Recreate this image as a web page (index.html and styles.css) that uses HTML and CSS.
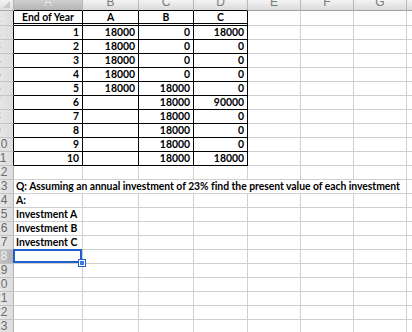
FILE: index.html
```html
<!DOCTYPE html>
<html>
<head>
<meta charset="utf-8">
<link rel="stylesheet" href="styles.css">
</head>
<body>
<div class="sheet">
  <div class="corner"><svg width="9" height="8" viewBox="0 0 9 8"><path d="M8 0 L8 7 L1 7 Z" fill="#c9c9c9"/></svg></div>
  <div class="ch sel tb">A</div><div class="ch tb">B</div><div class="ch tb">C</div><div class="ch tb">D</div><div class="ch">E</div><div class="ch">F</div><div class="ch">G</div><div class="ch">H</div>

  <div class="rh tb"><span>1</span></div>
  <div class="c t hd">End of Year</div><div class="c t hd">A</div><div class="c t hd">B</div><div class="c t hd">C</div><div class="c"></div><div class="c"></div><div class="c"></div><div class="c"></div>

  <div class="rh tb"><span>2</span></div>
  <div class="c t n">1</div><div class="c t n">18000</div><div class="c t n">0</div><div class="c t n">18000</div><div class="c"></div><div class="c"></div><div class="c"></div><div class="c"></div>

  <div class="rh tb"><span>3</span></div>
  <div class="c t n">2</div><div class="c t n">18000</div><div class="c t n">0</div><div class="c t n">0</div><div class="c"></div><div class="c"></div><div class="c"></div><div class="c"></div>

  <div class="rh tb"><span>4</span></div>
  <div class="c t n">3</div><div class="c t n">18000</div><div class="c t n">0</div><div class="c t n">0</div><div class="c"></div><div class="c"></div><div class="c"></div><div class="c"></div>

  <div class="rh tb"><span>5</span></div>
  <div class="c t n">4</div><div class="c t n">18000</div><div class="c t n">0</div><div class="c t n">0</div><div class="c"></div><div class="c"></div><div class="c"></div><div class="c"></div>

  <div class="rh tb"><span>6</span></div>
  <div class="c t n">5</div><div class="c t n">18000</div><div class="c t n">18000</div><div class="c t n">0</div><div class="c"></div><div class="c"></div><div class="c"></div><div class="c"></div>

  <div class="rh tb"><span>7</span></div>
  <div class="c t n">6</div><div class="c t n"></div><div class="c t n">18000</div><div class="c t n">90000</div><div class="c"></div><div class="c"></div><div class="c"></div><div class="c"></div>

  <div class="rh tb"><span>8</span></div>
  <div class="c t n">7</div><div class="c t n"></div><div class="c t n">18000</div><div class="c t n">0</div><div class="c"></div><div class="c"></div><div class="c"></div><div class="c"></div>

  <div class="rh tb"><span>9</span></div>
  <div class="c t n">8</div><div class="c t n"></div><div class="c t n">18000</div><div class="c t n">0</div><div class="c"></div><div class="c"></div><div class="c"></div><div class="c"></div>

  <div class="rh tb"><span>10</span></div>
  <div class="c t n">9</div><div class="c t n"></div><div class="c t n">18000</div><div class="c t n">0</div><div class="c"></div><div class="c"></div><div class="c"></div><div class="c"></div>

  <div class="rh tb"><span>11</span></div>
  <div class="c t n">10</div><div class="c t n"></div><div class="c t n">18000</div><div class="c t n">18000</div><div class="c"></div><div class="c"></div><div class="c"></div><div class="c"></div>

  <div class="rh"><span>12</span></div>
  <div class="c"></div><div class="c"></div><div class="c"></div><div class="c"></div><div class="c"></div><div class="c"></div><div class="c"></div><div class="c"></div>

  <div class="rh"><span>13</span></div>
  <div class="c lbl span7">Q: Assuming an annual investment of 23% find the present value of each investment</div><div class="c"></div>

  <div class="rh"><span>14</span></div>
  <div class="c lbl">A:</div><div class="c"></div><div class="c"></div><div class="c"></div><div class="c"></div><div class="c"></div><div class="c"></div><div class="c"></div>

  <div class="rh"><span>15</span></div>
  <div class="c lbl">Investment A</div><div class="c"></div><div class="c"></div><div class="c"></div><div class="c"></div><div class="c"></div><div class="c"></div><div class="c"></div>

  <div class="rh"><span>16</span></div>
  <div class="c lbl">Investment B</div><div class="c"></div><div class="c"></div><div class="c"></div><div class="c"></div><div class="c"></div><div class="c"></div><div class="c"></div>

  <div class="rh"><span>17</span></div>
  <div class="c lbl">Investment C</div><div class="c"></div><div class="c"></div><div class="c"></div><div class="c"></div><div class="c"></div><div class="c"></div><div class="c"></div>

  <div class="rh sel"><span>18</span></div>
  <div class="c active"><i class="handle"></i></div><div class="c"></div><div class="c"></div><div class="c"></div><div class="c"></div><div class="c"></div><div class="c"></div><div class="c"></div>

  <div class="rh"><span>19</span></div>
  <div class="c"></div><div class="c"></div><div class="c"></div><div class="c"></div><div class="c"></div><div class="c"></div><div class="c"></div><div class="c"></div>

  <div class="rh"><span>20</span></div>
  <div class="c"></div><div class="c"></div><div class="c"></div><div class="c"></div><div class="c"></div><div class="c"></div><div class="c"></div><div class="c"></div>

  <div class="rh"><span>21</span></div>
  <div class="c"></div><div class="c"></div><div class="c"></div><div class="c"></div><div class="c"></div><div class="c"></div><div class="c"></div><div class="c"></div>

  <div class="rh"><span>22</span></div>
  <div class="c"></div><div class="c"></div><div class="c"></div><div class="c"></div><div class="c"></div><div class="c"></div><div class="c"></div><div class="c"></div>

  <div class="rh"><span>23</span></div>
  <div class="c"></div><div class="c"></div><div class="c"></div><div class="c"></div><div class="c"></div><div class="c"></div><div class="c"></div><div class="c"></div>
</div>
</body>
</html>
```

FILE: styles.css
```css
html, body {
  margin: 0;
  padding: 0;
}
body {
  width: 412px;
  height: 332px;
  overflow: hidden;
  background: #fff;
  font-family: Lato, "Liberation Sans", sans-serif;
  font-size: 10.4px;
  color: #000;
}
.sheet {
  display: grid;
  grid-template-columns: 14px 69px 56px 55px 54px 53px 53px 53px 40px;
  grid-template-rows: 11px 15px repeat(22, 14px);
}
.sheet > div {
  box-sizing: border-box;
  overflow: hidden;
  white-space: nowrap;
  display: flex;
  align-items: flex-end;
}
.corner {
  background: linear-gradient(#f2f2f2, #dedede);
  border-right: 1px solid #b4b4b4;
  border-bottom: 1px solid #a8a8a8;
  justify-content: flex-end;
  align-items: flex-start !important;
}
.corner svg { display: block; margin: 1px 2px 0 0; }
.ch {
  background: linear-gradient(#f4f4f4, #dadada);
  border-right: 1px solid #b8b8b8;
  border-bottom: 1px solid #a0a0a0;
  justify-content: center;
  font-family: "Liberation Sans", sans-serif;
  font-size: 12px;
  line-height: 12px;
  color: #7a7a7a;
  padding-bottom: 2px;
}
.ch.sel {
  background: linear-gradient(#cfcfcf, #b4b4b4);
  color: #f4f4f4;
  text-shadow: 0 0 1px #8a8a8a;
}
.ch.tb { border-bottom-color: #000; }
.rh {
  background: linear-gradient(90deg, #e6e6e6, #dcdcdc);
  border-right: 1px solid #b4b4b4;
  border-bottom: 1px solid #c4c4c4;
  justify-content: flex-end;
  font-family: "Liberation Sans", sans-serif;
  font-size: 12px;
  line-height: 13px;
  color: #6a6a6a;
}
.rh span {
  flex: none;
  width: 19px;
  text-align: left;
}
.rh.tb { border-right-color: #000; }
.rh.sel {
  background: linear-gradient(90deg, #c2c2c2, #b2b2b2);
  color: #f2f2f2;
}
.c {
  border-right: 1px solid #d0d0d0;
  border-bottom: 1px solid #d0d0d0;
  padding: 0 2px 0 2px;
  line-height: 13px;
}
.c.t {
  border-right-color: #000;
  border-bottom-color: #000;
  font-weight: 700;
}
.c.n {
  justify-content: flex-end;
  padding-right: 3px;
}
.c.hd {
  justify-content: center;
  border-bottom: 3px double #000;
  line-height: 11px;
}
.c.lbl {
  font-weight: 700;
}
.span7 {
  grid-column: span 7;
  overflow: visible !important;
  letter-spacing: -0.04px;
}
.c.active {
  position: relative;
  overflow: visible !important;
}
.c.active::before {
  content: "";
  position: absolute;
  left: -1px;
  top: -1px;
  right: 0;
  bottom: 0;
  border: 2px solid #1d5fcc;
}
.handle {
  position: absolute;
  right: -3px;
  bottom: -3px;
  width: 4px;
  height: 4px;
  background: #3f7ee0;
  border: 1px solid #fff;
  box-shadow: 0 0 0 1px #1d5fcc;
  z-index: 2;
}
```
